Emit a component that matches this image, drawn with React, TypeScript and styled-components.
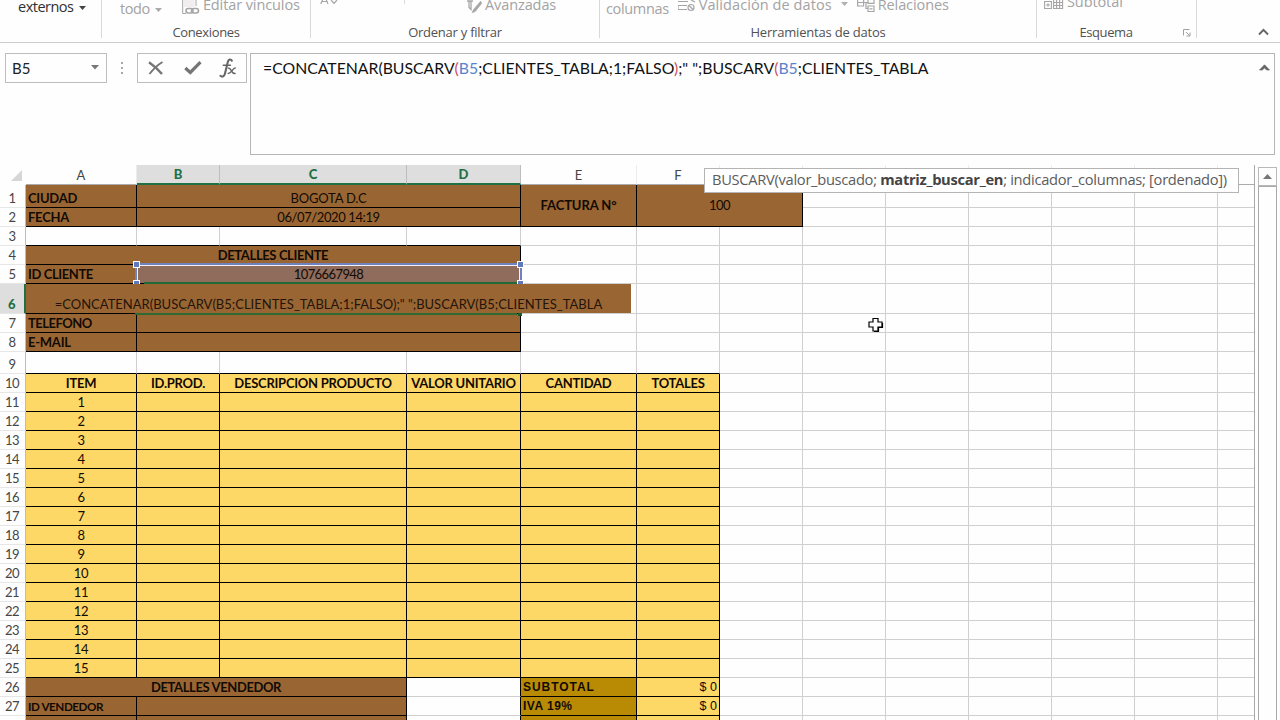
import React from "react";
import styled, { createGlobalStyle, css } from "styled-components";

const GlobalStyle = createGlobalStyle`
  * { box-sizing: border-box; }
  html, body { margin: 0; padding: 0; background: #fefefe; overflow: hidden; }
`;

const sheetFont = `Lato, "Liberation Sans", sans-serif`;
const uiFont = `"Open Sans", "Noto Sans", sans-serif`;

const BROWN = "#996633";
const YELLOW = "#fdd866";
const GOLD = "#b98b05";
const INK = "#120a04";
const GRID = "#cfcfcf";
const GREEN = "#1f7145";

const Screen = styled.div`
  width: 1280px;
  height: 720px;
  overflow: hidden;
  display: flex;
  flex-direction: column;
  background: #fefefe;
  font-family: ${uiFont};
`;

/* ---------- ribbon ---------- */

const Ribbon = styled.header`
  flex: none;
  height: 43px;
  display: flex;
  border-bottom: 1px solid #cdcdcd;
  overflow: hidden;
`;

const Group = styled.section<{ $width: number; $last?: boolean }>`
  flex: none;
  width: ${(p) => p.$width}px;
  height: 38px;
  display: flex;
  flex-direction: column;
  border-right: ${(p) => (p.$last ? "none" : "1px solid #d9d9d9")};
`;

const GroupBody = styled.div<{ $start: number }>`
  height: 22px;
  display: flex;
  align-items: flex-start;
  padding-left: ${(p) => p.$start}px;
`;

const GroupFooter = styled.div<{ $shift?: number }>`
  height: 16px;
  display: flex;
  justify-content: center;
  padding-left: ${(p) => p.$shift ?? 0}px;
`;

const GroupLabel = styled.span<{ $track?: number }>`
  font-size: 13px;
  line-height: 21px;
  color: #515151;
  white-space: nowrap;
  letter-spacing: ${(p) => p.$track ?? -0.25}px;
`;

const Command = styled.span<{ $raise: number; $gap?: number; $strong?: boolean; $track?: number }>`
  font-size: 14.5px;
  line-height: 20px;
  margin-top: ${(p) => -p.$raise}px;
  margin-left: ${(p) => p.$gap ?? 0}px;
  white-space: nowrap;
  color: ${(p) => (p.$strong ? "#303030" : "#a3a3a3")};
  letter-spacing: ${(p) => p.$track ?? -0.1}px;
`;

const Glyph = styled.svg<{ $gap?: number; $drop?: number }>`
  flex: none;
  display: block;
  margin-left: ${(p) => p.$gap ?? 0}px;
  margin-top: ${(p) => p.$drop ?? 0}px;
`;

const Triangle = ({ gap, drop, color }: { gap: number; drop: number; color: string }) => (
  <Glyph $gap={gap} $drop={drop} width="7" height="4" viewBox="0 0 7 4">
    <path d="M0 0h7L3.5 4z" fill={color} />
  </Glyph>
);

const RibbonEdge = styled.div`
  flex: 1;
  display: flex;
  justify-content: flex-end;
  padding: 28px 11px 0 0;
`;

/* ---------- formula bar ---------- */

const FormulaRow = styled.div`
  flex: none;
  display: flex;
  align-items: flex-start;
  height: 122px;
  padding: 10px 5px 0 5px;
`;

const NameBox = styled.div`
  width: 102px;
  height: 30px;
  border: 1px solid #bdbdbd;
  display: flex;
  align-items: center;
  justify-content: space-between;
  padding: 0 7px 1px 6px;
  font-family: ${sheetFont};
  font-size: 15px;
  color: #222;
`;

const Dots = styled.div`
  width: 30px;
  height: 30px;
  display: flex;
  flex-direction: column;
  align-items: center;
  justify-content: center;
  gap: 3px;

  i {
    width: 2px;
    height: 2px;
    background: #a8a8a8;
  }
`;

const FormulaButtons = styled.div`
  width: 110px;
  height: 30px;
  border: 1px solid #bdbdbd;
  display: flex;
  align-items: center;
`;

const FormulaInput = styled.div`
  margin-left: 3px;
  width: 1025px;
  height: 102px;
  border: 1px solid #b5b5b5;
  display: flex;
  justify-content: space-between;
  padding: 3px 4px 0 12px;
`;

const FormulaText = styled.div`
  font-family: ${sheetFont};
  font-size: 15.8px;
  line-height: 22px;
  color: #111;
  white-space: pre;
`;

const Paren = styled.span`
  color: #d0505c;
`;

const Ref = styled.span`
  color: #5b83cc;
`;

/* ---------- sheet ---------- */

const SheetArea = styled.div`
  flex: 1;
  display: flex;
  align-items: flex-start;
  min-height: 0;
`;

const COLUMNS = "26px 111px 83px 187px 114px 116px repeat(7, 83px) 37px";
const ROWS = "20px 23px repeat(4, 19px) 30px 19px 19px 22px repeat(19, 19px)";

const Sheet = styled.div`
  position: relative;
  flex: none;
  width: 1255px;
  height: 555px;
  overflow: hidden;
  display: grid;
  grid-template-columns: ${COLUMNS};
  grid-template-rows: ${ROWS};
  border-right: 1px solid #a9a9a9;
`;

const Corner = styled.div`
  grid-area: 1 / 1;
  display: flex;
  justify-content: flex-end;
  align-items: flex-end;
  padding: 0 4px 4px 0;
`;

const ColumnHeader = styled.div<{ $col: number; $on?: boolean }>`
  grid-row: 1;
  grid-column: ${(p) => p.$col};
  display: flex;
  justify-content: center;
  align-items: center;
  font-family: ${sheetFont};
  font-size: 13px;
  color: #454545;
  border-bottom: 1px solid #ababab;
  border-right: 1px solid #ececec;
  ${(p) =>
    p.$on &&
    css`
      background: #dedede;
      color: ${GREEN};
      font-weight: 900;
      border-bottom: 2px solid ${GREEN};
      border-right-color: #bdbdbd;
    `}
`;

const RowHeader = styled.div<{ $row: number; $on?: boolean }>`
  grid-column: 1;
  grid-row: ${(p) => p.$row + 1};
  display: flex;
  justify-content: center;
  align-items: flex-end;
  padding-right: 1px;
  font-family: ${sheetFont};
  font-size: 13px;
  line-height: 17px;
  letter-spacing: -0.5px;
  color: #454545;
  border-right: 1px solid #b9bcc4;
  border-bottom: 1px solid #e6e6e6;
  ${(p) =>
    p.$on &&
    css`
      background: #dedede;
      color: ${GREEN};
      font-weight: 900;
      border-right: 2px solid ${GREEN};
    `}
`;

type CellProps = {
  $c: number;
  $r: number;
  $cs?: number;
  $rs?: number;
  $fill?: string;
  $line?: string;
  $under?: string;
  $bold?: boolean;
  $align?: "start" | "center" | "end";
  $middle?: boolean;
  $size?: number;
  $track?: number;
  $face?: string;
};

const Cell = styled.div<CellProps>`
  grid-column: ${(p) => p.$c + 1} / span ${(p) => p.$cs ?? 1};
  grid-row: ${(p) => p.$r + 1} / span ${(p) => p.$rs ?? 1};
  display: flex;
  justify-content: ${(p) => p.$align ?? "center"};
  align-items: ${(p) => (p.$middle ? "center" : "flex-end")};
  padding: 0 2px;
  white-space: pre;
  font-family: ${(p) => p.$face ?? sheetFont};
  font-size: ${(p) => p.$size ?? 13}px;
  font-weight: ${(p) => (p.$bold ? 700 : 400)};
  line-height: 17px;
  letter-spacing: ${(p) => p.$track ?? (p.$bold ? -0.25 : 0)}px;
  color: ${INK};
  background: ${(p) => p.$fill ?? "transparent"};
  border-right: 1px solid ${(p) => p.$line ?? GRID};
  border-bottom: 1px solid ${(p) => p.$under ?? p.$line ?? GRID};
`;

const CellEditor = styled.div`
  position: absolute;
  left: 26px;
  top: 119px;
  width: 605px;
  height: 29px;
  display: flex;
  align-items: flex-end;
  justify-content: center;
  background: ${BROWN};
  font-family: ${sheetFont};
  font-size: 13px;
  line-height: 18px;
  color: #25140a;
  white-space: pre;
`;

const EditUnderline = styled.div`
  position: absolute;
  left: 135px;
  top: 148px;
  width: 382px;
  height: 2px;
  background: #2f6a33;
`;

const FillHandle = styled.div`
  position: absolute;
  left: 518px;
  top: 148px;
  width: 4px;
  height: 3px;
  background: #1d5a2a;
`;

const RangeFrame = styled.div`
  position: absolute;
  left: 135px;
  top: 98px;
  width: 387px;
  height: 21px;
  border: solid #6f82c0;
  border-width: 2px 2px 0 2px;
  box-shadow: inset 1px 1px 0 #f3f1f5, inset -1px 0 0 #f3f1f5;

  &::after {
    content: "";
    position: absolute;
    left: 7px;
    right: 2px;
    bottom: 0;
    height: 2px;
    background: #24693a;
  }
`;

const RangeHandle = styled.i<{ $x: number; $y: number; $h: number }>`
  position: absolute;
  left: ${(p) => p.$x}px;
  top: ${(p) => p.$y}px;
  width: 7px;
  height: ${(p) => p.$h}px;
  background: #6178bd;
  border: 1px solid #fff;
  border-bottom-width: ${(p) => (p.$h < 6 ? 0 : 1)}px;
`;

const Tooltip = styled.div`
  position: absolute;
  left: 704px;
  top: 3px;
  width: 535px;
  height: 25px;
  padding-left: 7px;
  border: 1px solid #b4b4b4;
  background: #fff;
  font-size: 14.7px;
  line-height: 20px;
  letter-spacing: -0.3px;
  color: #5c5c5c;
  white-space: pre;

  b {
    color: #444;
  }
`;

const Pointer = styled.svg`
  position: absolute;
  left: 868px;
  top: 152px;
`;

const ScrollTrack = styled.div`
  margin: 2px 0 0 3px;
  width: 19px;
  height: 560px;
  display: flex;
  flex-direction: column;
`;

const ScrollButton = styled.div`
  height: 19px;
  border: 1px solid #b9b9b9;
  display: flex;
  align-items: center;
  justify-content: center;
`;

const ScrollThumb = styled.div`
  flex: 1;
  border: 1px solid #a9a9a9;
`;

/* ---------- data ---------- */

const letters = ["A", "B", "C", "D", "E", "F", "", "", "", "", "", "", ""];
const rows = Array.from({ length: 28 }, (_, i) => i + 1);
const items = Array.from({ length: 15 }, (_, i) => i + 1);
const titles = ["ITEM", "ID.PROD.", "DESCRIPCION PRODUCTO", "VALOR UNITARIO", "CANTIDAD", "TOTALES"];
const totals = ["SUBTOTAL", "IVA 19%", "TOTAL"];
const arial = `"Liberation Sans", sans-serif`;

/* Last column filled by the form on every row; the rest shows plain gridlines. */
const filledUpTo = (row: number) => {
  if (row <= 2) return 7;
  if (row === 3 || row === 9) return 0;
  if (row <= 8) return 4;
  return 6;
};

const PlainCells = () => (
  <>
    {rows.map((r) =>
      letters.map((_, i) => {
        const c = i + 1;
        if (c <= filledUpTo(r)) return null;
        const black = (r === 3 && c <= 4) || (r === 9 && c <= 6);
        return <Cell key={`${r}-${c}`} $r={r} $c={c} $under={black ? "#000" : GRID} />;
      })
    )}
  </>
);

export default function App() {
  return (
    <Screen>
      <GlobalStyle />
      <Ribbon>
        <Group $width={102}>
          <GroupBody $start={18}>
            <Command $raise={3} $strong $track={-0.5}>externos</Command>
            <Triangle gap={5} drop={6} color="#444" />
          </GroupBody>
        </Group>
        <Group $width={209}>
          <GroupBody $start={18}>
            <Command $raise={1} $track={-0.4}>todo</Command>
            <Triangle gap={5} drop={8} color="#aaa" />
            <Glyph $gap={20} width="18" height="15" viewBox="0 0 18 15" fill="none" stroke="#a6a6a6">
              <path d="M.7 0v13.5H4M14 0v6" />
              <rect x="1.5" y="0" width="11" height="7" fill="#f1eef0" stroke="none" />
              <rect x="4" y="8.5" width="7" height="4.5" rx="2.2" strokeWidth="1.6" />
              <rect x="9.5" y="8.5" width="7" height="4.5" rx="2.2" strokeWidth="1.6" />
            </Glyph>
            <Command $raise={5} $gap={3}>Editar vínculos</Command>
          </GroupBody>
          <GroupFooter><GroupLabel $track={-0.35}>Conexiones</GroupLabel></GroupFooter>
        </Group>
        <Group $width={289}>
          <GroupBody $start={9}>
            <Glyph width="18" height="5" viewBox="0 0 18 5" fill="none" stroke="#a6a6a6" strokeWidth="1.2">
              <path d="M.8 4L2.5 0M8 4L6.4 0M2 1.5h5M11 0l3 3.3L17 0" />
            </Glyph>
            <Glyph $gap={66} width="1" height="4" viewBox="0 0 1 4"><path d="M0 0h1v4H0z" fill="#d9d9d9" /></Glyph>
            <Glyph $gap={61} width="17" height="15" viewBox="0 0 17 15" fill="none" stroke="#a6a6a6" strokeWidth="1.3">
              <path d="M1 1h6M3 1v6.5l2 2V1" />
              <path d="M14.8 1L7.5 9.5 6 12.8l3.3-1.4L16 3" fill="#a6a6a6" strokeWidth=".6" />
            </Glyph>
            <Command $raise={5} $gap={2}>Avanzadas</Command>
          </GroupBody>
          <GroupFooter><GroupLabel>Ordenar y filtrar</GroupLabel></GroupFooter>
        </Group>
        <Group $width={437}>
          <GroupBody $start={6}>
            <Command $raise={1} $track={-0.35}>columnas</Command>
            <Glyph $gap={9} width="18" height="12" viewBox="0 0 18 12" fill="none" stroke="#a6a6a6" strokeWidth="1.2">
              <path d="M0 1.5h10M13 0l4 2M0 5.5h9M0 9.5h9M0 5.5v4" />
              <circle cx="13" cy="7.5" r="3" />
              <path d="M11 5.5l4 4" />
            </Glyph>
            <Command $raise={5} $gap={3} $track={0.08}>Validación de datos</Command>
            <Triangle gap={9} drop={2} color="#b0b0b0" />
            <Glyph $gap={9} width="18" height="13" viewBox="0 0 18 13" fill="none" stroke="#a6a6a6" strokeWidth="1.2">
              <path d="M.6 0v6h6V0M.6 2.5h6M7 2.5h3.5M9 2.5v6h2M11 0v3.4h6V0M11 6h6v5.5h-6zM12.5 8.8h3" />
            </Glyph>
            <Command $raise={5} $gap={3}>Relaciones</Command>
          </GroupBody>
          <GroupFooter><GroupLabel $track={-0.2}>Herramientas de datos</GroupLabel></GroupFooter>
        </Group>
        <Group $width={160}>
          <GroupBody $start={7}>
            <Glyph width="20" height="9" viewBox="0 0 20 9" fill="none" stroke="#a6a6a6" strokeWidth="1.1">
              <path d="M.6 1.5h6.8v7H.6zM4 3.2v3.6M2.2 5h3.6M9.6 0v8.5h9V0M9.6 2.5h9M9.6 5.5h9M12.6 0v8.5M15.6 0v8.5" />
            </Glyph>
            <Command $raise={8} $gap={3}>Subtotal</Command>
          </GroupBody>
          <GroupFooter $shift={37}>
            <GroupLabel $track={-0.4}>Esquema</GroupLabel>
            <Glyph $gap={50} $drop={7} width="8" height="8" viewBox="0 0 8 8" fill="none" stroke="#a0a0a0">
              <path d="M.5 6.5v-6h6M3 3l3.5 3.5M7 3.5V7H3.5" />
            </Glyph>
          </GroupFooter>
        </Group>
        <RibbonEdge>
          <svg width="11" height="8" viewBox="0 0 11 8" fill="none" stroke="#666" strokeWidth="2">
            <path d="M1 6.5l4.5-4.6L10 6.5" />
          </svg>
        </RibbonEdge>
      </Ribbon>

      <FormulaRow>
        <NameBox>
          B5
          <svg width="8" height="5" viewBox="0 0 8 5"><path d="M0 0h8L4 4.6z" fill="#777" /></svg>
        </NameBox>
        <Dots><i /><i /><i /></Dots>
        <FormulaButtons>
          <Glyph $gap={10} width="16" height="14" viewBox="0 0 16 14" fill="none" stroke="#757575">
            <path d="M1 1.2C5 4 10.5 9 14 13" strokeWidth="2.4" />
            <path d="M14.5 1C9.5 4 5 8.5 1.5 13" strokeWidth="1.9" />
          </Glyph>
          <Glyph $gap={20} width="18" height="14" viewBox="0 0 18 14" fill="none" stroke="#757575" strokeWidth="3.2">
            <path d="M1.3 7l5 4.500L16.500 1.200" />
          </Glyph>
          <Glyph $gap={17} width="18" height="20" viewBox="0 0 18 20" fill="none" stroke="#666" strokeLinecap="round">
            <path d="M12.800 2.600C11.800.9 9.600 1 8.800 4L6 15.500C5.300 18.600 3.200 19.300 1.400 17.800" strokeWidth="2.100" />
            <path d="M4.300 7.300h7.200" strokeWidth="1.400" />
            <path d="M9.500 10.300c2.600-1.200 3 5.800 6.500 5.300M16.200 10c-2.500 0-4 5.800-7 5.600" strokeWidth="1.500" />
          </Glyph>
        </FormulaButtons>
        <FormulaInput>
          <FormulaText>
            =CONCATENAR(BUSCARV<Paren>(</Paren><Ref>B5</Ref>;CLIENTES_TABLA;1;FALSO<Paren>)</Paren>;" ";BUSCARV<Paren>(</Paren><Ref>B5</Ref>;CLIENTES_TABLA
          </FormulaText>
          <Glyph $drop={7} width="11" height="8" viewBox="0 0 11 8">
            <path d="M5.500.8L10.500 6H7.800L5.500 4 3.200 6H.5z" fill="#666" stroke="#666" strokeWidth=".7" />
          </Glyph>
        </FormulaInput>
      </FormulaRow>

      <SheetArea>
        <Sheet>
          <Corner>
            <svg width="11" height="11" viewBox="0 0 11 11"><path d="M11 0v11H0z" fill="#d6d6d6" /></svg>
          </Corner>
          {letters.map((l, i) => (
            <ColumnHeader key={i} $col={i + 2} $on={i > 0 && i < 4}>{l}</ColumnHeader>
          ))}
          {rows.map((r) => (
            <RowHeader key={r} $row={r} $on={r === 6}>{r}</RowHeader>
          ))}
          <PlainCells />

          <Cell $r={1} $c={1} $fill={BROWN} $line="#000" $bold $align="start">CIUDAD</Cell>
          <Cell $r={1} $c={2} $cs={3} $fill={BROWN} $line="#000" $track={-0.2}>BOGOTA D.C</Cell>
          <Cell $r={2} $c={1} $fill={BROWN} $line="#000" $bold $align="start">FECHA</Cell>
          <Cell $r={2} $c={2} $cs={3} $fill={BROWN} $line="#000" $track={-0.4}>06/07/2020 14:19</Cell>
          <Cell $r={1} $c={5} $rs={2} $fill={BROWN} $line="#000" $bold $middle $track={-0.1}>FACTURA N°</Cell>
          <Cell $r={1} $c={6} $cs={2} $rs={2} $fill={BROWN} $line="#000" $middle $track={-0.5}>100</Cell>

          <Cell $r={4} $c={1} $cs={4} $fill={BROWN} $line="#000" $bold $track={-0.38}>DETALLES CLIENTE</Cell>
          <Cell $r={5} $c={1} $fill={BROWN} $line="#000" $bold $align="start" $track={-0.4}>ID CLIENTE</Cell>
          <Cell $r={5} $c={2} $cs={3} $fill="#8f6c5b" $line="#000" $track={-0.6}>1076667948</Cell>
          <Cell $r={6} $c={1} $cs={4} $fill={BROWN} $line="#000" />
          <Cell $r={7} $c={1} $fill={BROWN} $line="#000" $bold $align="start" $track={-0.5}>TELEFONO</Cell>
          <Cell $r={7} $c={2} $cs={3} $fill={BROWN} $line="#000" />
          <Cell $r={8} $c={1} $fill={BROWN} $line="#000" $bold $align="start">E-MAIL</Cell>
          <Cell $r={8} $c={2} $cs={3} $fill={BROWN} $line="#000" />

          {titles.map((t, i) => (
            <Cell key={t} $r={10} $c={i + 1} $fill={YELLOW} $line="#000" $bold>{t}</Cell>
          ))}
          {items.map((n) =>
            titles.map((t, i) => (
              <Cell key={`${t}${n}`} $r={10 + n} $c={i + 1} $fill={YELLOW} $line="#000" $track={-0.4}>
                {i === 0 ? n : ""}
              </Cell>
            ))
          )}

          <Cell $r={26} $c={1} $cs={3} $fill={BROWN} $line="#000" $bold $track={-0.38}>DETALLES VENDEDOR</Cell>
          <Cell $r={27} $c={1} $fill={BROWN} $line="#000" $bold $size={11.7} $track={-0.45} $align="start">ID VENDEDOR</Cell>
          <Cell $r={27} $c={2} $cs={2} $fill={BROWN} $line="#000" />
          <Cell $r={28} $c={1} $fill={BROWN} $line="#000" />
          <Cell $r={28} $c={2} $cs={2} $fill={BROWN} $line="#000" />
          {totals.map((t, i) => (
            <React.Fragment key={t}>
              <Cell $r={26 + i} $c={4} $line="#000" $under={GRID} />
              <Cell $r={26 + i} $c={5} $fill={GOLD} $line="#000" $bold $align="start" $face={arial} $size={12} $track={i ? 0.5 : 0.95}>{t}</Cell>
              <Cell $r={26 + i} $c={6} $fill={YELLOW} $line="#000" $align="end" $face={arial} $size={12.5}>$ 0</Cell>
            </React.Fragment>
          ))}

          <RangeFrame />
          <RangeHandle $x={133} $y={96} $h={7} />
          <RangeHandle $x={517} $y={96} $h={7} />
          <RangeHandle $x={133} $y={115} $h={4} />
          <RangeHandle $x={517} $y={115} $h={4} />
          <CellEditor>{'=CONCATENAR(BUSCARV(B5;CLIENTES_TABLA;1;FALSO);" ";BUSCARV(B5;CLIENTES_TABLA'}</CellEditor>
          <EditUnderline />
          <FillHandle />
          <Tooltip>BUSCARV(valor_buscado; <b>matriz_buscar_en</b>; indicador_columnas; [ordenado])</Tooltip>
          <Pointer width="16" height="16" viewBox="0 0 16 16">
            <path d="M5 1.500h5v3.500h4v5h-4v4H5v-4H1V5h4z" fill="#fff" stroke="#000" strokeWidth="1.200" />
            <path d="M6 14.500h4.500V10.500h4V6" fill="none" stroke="#000" strokeWidth="1.200" />
          </Pointer>
        </Sheet>
        <ScrollTrack>
          <ScrollButton>
            <svg width="9" height="5" viewBox="0 0 9 5"><path d="M0 5h9L4.500 0z" fill="#777" /></svg>
          </ScrollButton>
          <ScrollThumb />
        </ScrollTrack>
      </SheetArea>
    </Screen>
  );
}
